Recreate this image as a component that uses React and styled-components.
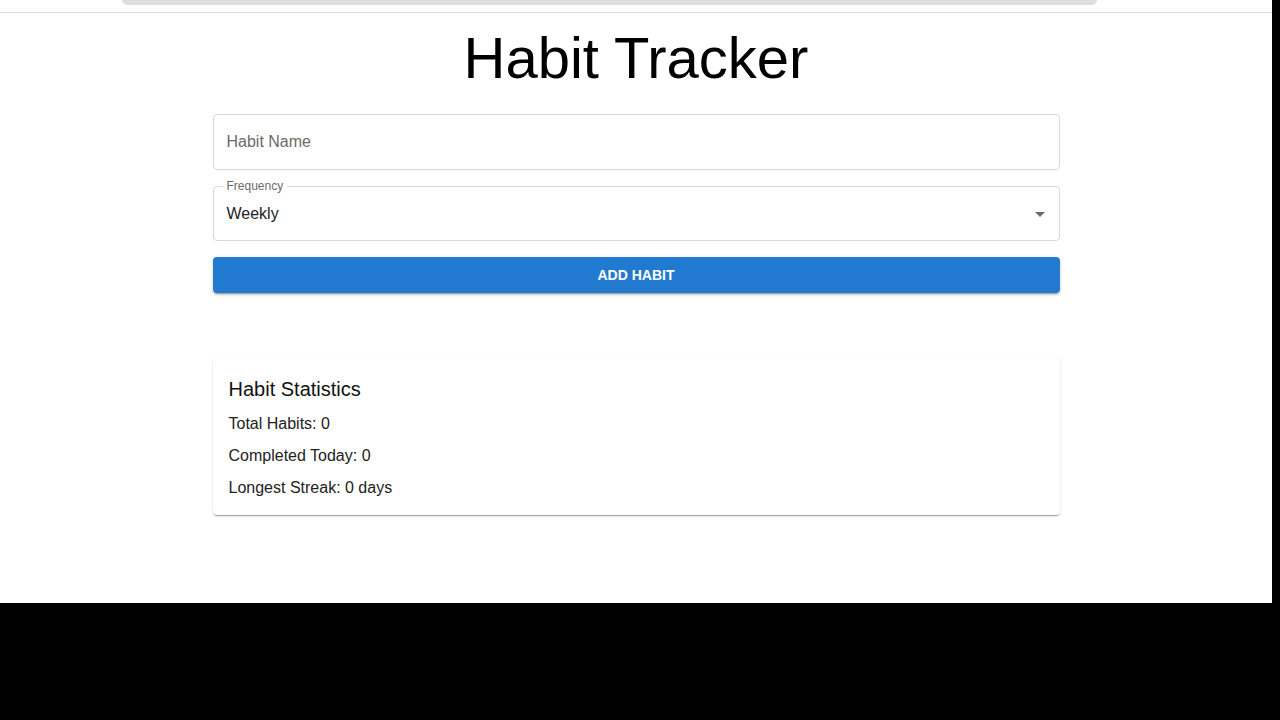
import React from 'react'
import styled, { createGlobalStyle } from 'styled-components'

const GlobalStyle = createGlobalStyle`
  html, body {
    margin: 0;
    padding: 0;
    background: #000;
  }
  body {
    font-family: "Liberation Sans", Arial, Helvetica, sans-serif;
    width: 1280px;
    height: 720px;
    overflow: hidden;
  }
`

const Viewport = styled.div`
  width: 1272px;
  height: 603px;
  background: #fff;
  display: flex;
  flex-direction: column;
  overflow: hidden;
`

const BrowserEdge = styled.div`
  height: 12px;
  flex-shrink: 0;
  border-bottom: 1px solid #d9d9d9;
  display: flex;
  padding-left: 122px;
`

const EdgePill = styled.div`
  width: 975px;
  height: 5px;
  background: #dedede;
  border-radius: 0 0 6px 6px;
`

const Container = styled.main`
  width: 847px;
  margin: 0 auto;
  display: flex;
  flex-direction: column;
`

const Title = styled.h1`
  margin: 14px 0 0;
  height: 87px;
  text-align: center;
  font-size: 58px;
  font-weight: 400;
  line-height: 62px;
  color: #000;
`

const Form = styled.form`
  display: flex;
  flex-direction: column;
  gap: 16px;
`

const Field = styled.div`
  position: relative;
  height: ${p => (p.$select ? '55px' : '56px')};
  box-sizing: border-box;
  border: 1px solid #d8d8d8;
  border-radius: 4px;
  display: flex;
  align-items: center;
  padding: 0 13px;
  font-size: 16px;
  color: ${p => (p.$placeholder ? '#6b6b6b' : '#222')};
`

const FieldLabel = styled.span`
  position: absolute;
  top: -8px;
  left: 9px;
  padding: 0 4px;
  background: #fff;
  font-size: 12px;
  line-height: 14px;
  color: #6b6b6b;
`

const Caret = styled.svg`
  margin-left: auto;
  margin-right: -6px;
  width: 24px;
  height: 24px;
  fill: #6b6b6b;
`

const Button = styled.button`
  height: 36px;
  border: none;
  border-radius: 4px;
  background: #2179d0;
  color: #fff;
  font-family: inherit;
  font-size: 14px;
  font-weight: 700;
  text-transform: uppercase;
  box-shadow: 0 3px 1px -2px rgba(0,0,0,0.2), 0 2px 2px 0 rgba(0,0,0,0.14), 0 1px 5px 0 rgba(0,0,0,0.12);
  cursor: pointer;
`

const Card = styled.section`
  margin-top: 65px;
  border-radius: 4px;
  background: #fff;
  box-shadow: 0 2px 1px -1px rgba(0,0,0,0.2), 0 1px 1px 0 rgba(0,0,0,0.14), 0 1px 3px 0 rgba(0,0,0,0.12);
  padding: 16px 16px 11px;
  display: flex;
  flex-direction: column;
`

const CardTitle = styled.h2`
  margin: 0 0 4px;
  font-size: 20px;
  font-weight: 400;
  line-height: 30px;
  color: #111;
`

const StatLine = styled.p`
  margin: 0;
  font-size: 16px;
  line-height: 32px;
  color: #222;
`

const stats = [
  { label: 'Total Habits', value: '0' },
  { label: 'Completed Today', value: '0' },
  { label: 'Longest Streak', value: '0 days' },
]

const App = () => {
  return (
    <>
      <GlobalStyle />
      <Viewport>
        <BrowserEdge>
          <EdgePill />
        </BrowserEdge>
        <Container>
          <Title>Habit Tracker</Title>
          <Form onSubmit={e => e.preventDefault()}>
            <Field $placeholder>Habit Name</Field>
            <Field $select>
              <FieldLabel>Frequency</FieldLabel>
              Weekly
              <Caret viewBox="0 0 24 24">
                <path d="M7 10l5 5 5-5z" />
              </Caret>
            </Field>
            <Button type="submit">Add Habit</Button>
          </Form>
          <Card>
            <CardTitle>Habit Statistics</CardTitle>
            {stats.map(s => (
              <StatLine key={s.label}>{s.label}: {s.value}</StatLine>
            ))}
          </Card>
        </Container>
      </Viewport>
    </>
  )
}

export default App
